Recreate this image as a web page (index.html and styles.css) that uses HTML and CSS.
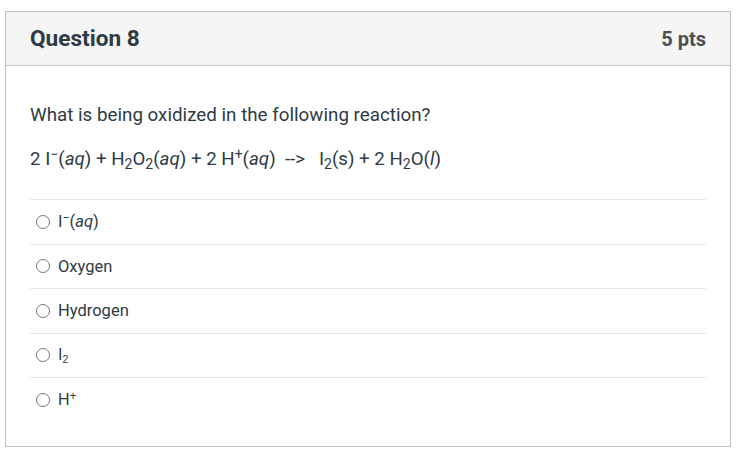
FILE: index.html
```html
<!DOCTYPE html>
<html>
<head>
<meta charset="utf-8">
<link rel="stylesheet" href="styles.css">
</head>
<body>
<div class="card">
  <div class="header">
    <h2 class="title">Question 8</h2>
    <div class="pts">5 pts</div>
  </div>
  <div class="body">
    <p class="q">What is being oxidized in the following reaction?</p>
    <p class="eq">2 I<sup>−</sup>(<i>aq</i>) + H<sub>2</sub>O<sub>2</sub>(<i>aq</i>) + 2 H<sup>+</sup>(<i>aq</i>) &nbsp;--&gt; &nbsp; I<sub>2</sub>(s) + 2 H<sub>2</sub>O(<i>l</i>)</p>
    <div class="answers">
      <label class="opt"><span class="radio"></span><span>I<sup>−</sup>(<i>aq</i>)</span></label>
      <label class="opt"><span class="radio"></span><span>Oxygen</span></label>
      <label class="opt"><span class="radio"></span><span>Hydrogen</span></label>
      <label class="opt"><span class="radio"></span><span class="arial">I<sub>2</sub></span></label>
      <label class="opt"><span class="radio"></span><span class="arial">H<sup>+</sup></span></label>
    </div>
  </div>
</div>
</body>
</html>
```
FILE: styles.css
```css
html, body { margin: 0; padding: 0; background: #fff; }
body { padding: 11px 0 0 5px; font-family: Roboto, "Liberation Sans", sans-serif; color: #2d3b45; }
.card { width: 724px; height: 434px; border: 1px solid #bfbfbf; box-sizing: content-box; }
.header { height: 53px; background: #f5f5f5; border-bottom: 1px solid #c7c7c7; display: flex; align-items: center; justify-content: space-between; padding: 0 24px 0 24px; }
.title { margin: 0; font-size: 22.6px; font-weight: 700; color: #2d3b45; }
.pts { font-size: 20px; font-weight: 700; color: #4a4f53; }
.body { padding: 0 24px 0 24px; }
.q { margin: 0; padding-top: 37px; font-size: 18.8px; line-height: 24px; }
.eq { margin: 0; padding-top: 20px; font-size: 18.7px; line-height: 24px; }
.eq sub, .opt sub { font-size: 0.75em; vertical-align: -0.25em; line-height: 0; }
.eq sup, .opt sup { font-size: 0.75em; vertical-align: 0.4em; line-height: 0; }
.answers { margin-top: 28px; }
.opt { display: flex; align-items: center; gap: 9px; height: 43.5px; border-top: 1px solid #e6e6e6; padding-left: 7px; font-size: 16.5px; color: #2d3b45; }
.radio { width: 12px; height: 12px; border: 1px solid #777; border-radius: 50%; flex: none; margin-left: -1px; margin-right: -1px; }
.arial { font-family: Arial, "Liberation Sans", sans-serif; font-size: 16px; }
.arial sub { font-size: 0.65em; vertical-align: -0.3em; }
```
